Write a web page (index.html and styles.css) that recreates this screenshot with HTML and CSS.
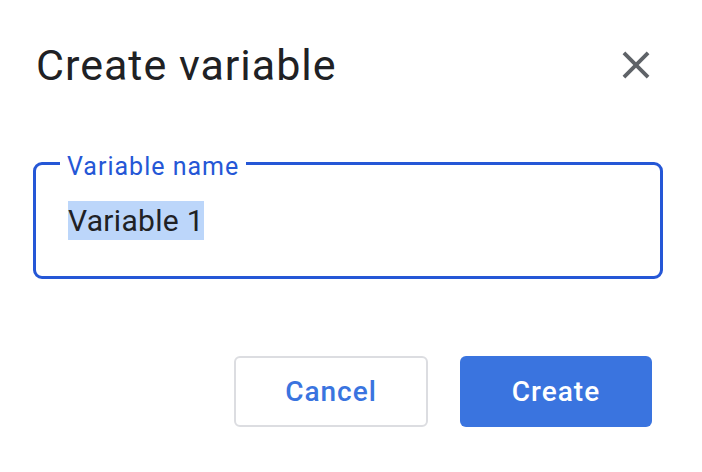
FILE: index.html
```html
<!DOCTYPE html>
<html lang="en">
<head>
<meta charset="utf-8">
<title>Create variable</title>
<link rel="stylesheet" href="styles.css">
</head>
<body>
<div class="dialog">
  <div class="header">
    <h1 class="title">Create variable</h1>
    <button class="close" aria-label="Close">
      <svg viewBox="0 0 24 24" width="46" height="46"><path d="M19 6.41L17.59 5 12 10.59 6.41 5 5 6.41 10.59 12 5 17.59 6.41 19 12 13.41 17.59 19 19 17.59 13.41 12z" fill="#5f6368"/></svg>
    </button>
  </div>
  <fieldset class="field">
    <legend class="label">Variable name</legend>
    <div class="value"><span class="sel">Variable 1</span></div>
  </fieldset>
  <div class="actions">
    <button class="btn btn-cancel">Cancel</button>
    <button class="btn btn-create">Create</button>
  </div>
</div>
</body>
</html>
```

FILE: styles.css
```css
html, body {
  margin: 0;
  background: #ffffff;
  font-family: Roboto, "Noto Sans", Arial, sans-serif;
}

.dialog {
  width: 702px;
  height: 472px;
  box-sizing: border-box;
  padding: 42px 39px 0 33px;
}

.header {
  display: flex;
  justify-content: space-between;
  align-items: center;
  height: 46px;
  padding: 0 4px 0 3px;
}

.title {
  margin: 0;
  font-size: 43px;
  line-height: 46px;
  letter-spacing: 1px;
  font-weight: 400;
  color: #202124;
}

.close {
  width: 46px;
  height: 46px;
  padding: 0;
  border: 0;
  background: none;
  display: flex;
}

.field {
  margin: 60px 0 0 0;
  padding: 23px 24px 36px 24px;
  border: 3px solid #2557d6;
  border-radius: 9px;
  min-width: 0;
}

.label {
  padding: 8px 7px 0 7px;
  font-size: 25px;
  line-height: 22px;
  letter-spacing: 1px;
  color: #2557d6;
}

.value {
  padding-left: 8px;
  font-size: 30px;
  line-height: 39px;
  letter-spacing: 0.3px;
  color: #202124;
}

.sel {
  display: inline-block;
  background: #bcd6fa;
}

.actions {
  display: flex;
  justify-content: flex-end;
  gap: 32px;
  margin-top: 77px;
  padding-right: 11px;
}

.btn {
  height: 71px;
  border-radius: 6px;
  font-family: Roboto, "Noto Sans", Arial, sans-serif;
  font-size: 28px;
  letter-spacing: 1px;
  font-weight: 500;
  cursor: pointer;
}

.btn-cancel {
  width: 194px;
  background: #ffffff;
  border: 2px solid #dcdde1;
  color: #3a74df;
}

.btn-create {
  width: 192px;
  background: #3a74df;
  border: 0;
  color: #ffffff;
}
```
